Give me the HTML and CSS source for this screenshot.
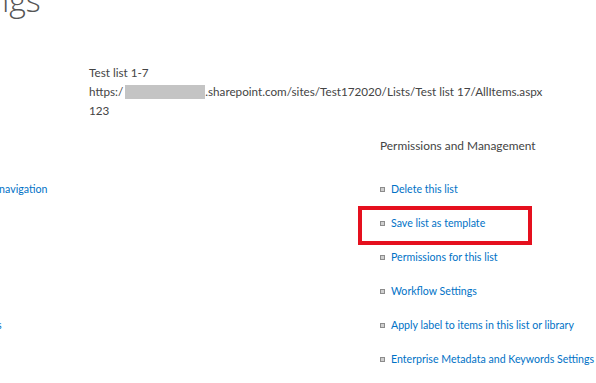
FILE: index.html
```html
<html>
<head>
    <meta charset="UTF-8">
    <link rel="stylesheet" href="styles.css">
</head>

<body>

<div class="page">
    <h1 class="title">List Settings</h1>

    <div class="info">
        <div class="info_line">Test list 1-7</div>
        <div class="info_line">https:/<span class="redacted"></span>.sharepoint.com/sites/Test172020/Lists/Test list 17/AllItems.aspx</div>
        <div class="info_line">123</div>
    </div>

    <div class="sections">
        <div class="section general">
            <h2>General Settings</h2>
            <ul>
                <li><a href="#">List name, description and navigation</a></li>
                <li><a href="#">Versioning settings</a></li>
                <li><a href="#">Advanced settings</a></li>
                <li><a href="#">Validation settings</a></li>
                <li><a href="#">Audience targeting settings</a></li>
                <li><a href="#">Rating settings</a></li>
            </ul>
        </div>
        <div class="section manage">
            <h2>Permissions and Management</h2>
            <ul>
                <li><a href="#">Delete this list</a></li>
                <li class="marked"><a href="#">Save list as template</a></li>
                <li><a href="#">Permissions for this list</a></li>
                <li><a href="#">Workflow Settings</a></li>
                <li><a href="#">Apply label to items in this list or library</a></li>
                <li><a href="#">Enterprise Metadata and Keywords Settings</a></li>
            </ul>
        </div>
    </div>
</div>

</body>

</html>
```

FILE: styles.css
```css
body {
    margin: 0;
    overflow: hidden;
    font-family: Lato, "Open Sans", sans-serif;
    color: #444;
    background: #fff;
}

.page {
    margin-left: -150px;
    width: 900px;
}

.title {
    margin: -20px 0 0 0;
    padding-left: 19px;
    font-family: "Open Sans", sans-serif;
    font-size: 32px;
    font-weight: 300;
    line-height: 40px;
    color: #555;
}

.info {
    margin-top: 43px;
    padding-left: 239px;
    font-size: 11.7px;
    line-height: 19px;
    color: #444;
}

.info .redacted {
    display: inline-block;
    width: 80px;
    height: 14px;
    margin-left: 2px;
    vertical-align: -3px;
    background: #c4c4c4;
}

.sections {
    display: flex;
    margin-top: 17px;
}

.section h2 {
    margin: 0 0 17px 0;
    font-size: 11.9px;
    font-weight: normal;
    line-height: 18px;
    color: #444;
}

.section.general {
    box-sizing: border-box;
    width: 530px;
    padding-left: 14px;
}

.section ul {
    margin: 0;
    padding: 0;
    list-style: none;
}

.section li {
    position: relative;
    display: flex;
    align-items: center;
    gap: 6px;
    height: 34px;
    font-size: 10.6px;
}

.section li::before {
    content: "";
    width: 3px;
    height: 3px;
    border: 1px solid #8c8c8c;
    background: #cfcfcf;
}

.section a {
    color: #0072c6;
    text-decoration: none;
}

/* annotation box round one link */
.section li.marked::after {
    content: "";
    position: absolute;
    left: -22px;
    top: 0;
    width: 166px;
    height: 31px;
    border: 4px solid #e5101e;
}
```
